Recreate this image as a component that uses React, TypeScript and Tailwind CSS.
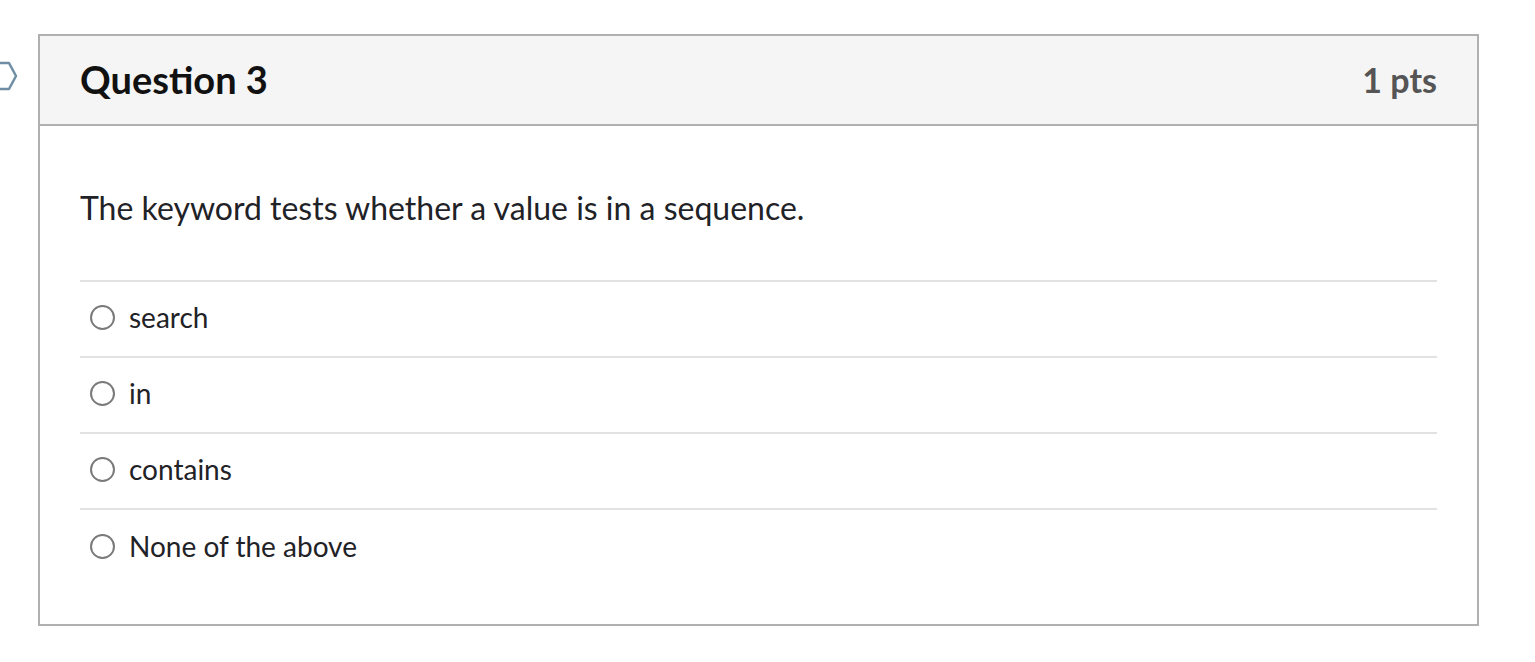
import React from "react";

const answers = ["search", "in", "contains", "None of the above"];

function FlagIcon() {
  return (
    <svg
      width="22"
      height="32"
      viewBox="0 0 22 32"
      className="absolute left-[-4px] top-[60px]"
      aria-hidden="true"
    >
      <path
        d="M0 3 H13 L20 16 L13 29 H0"
        fill="none"
        stroke="#6f8ea5"
        strokeWidth="2.5"
        strokeLinejoin="round"
      />
    </svg>
  );
}

export default function App() {
  return (
    <div className="relative min-h-[662px] bg-white pt-[34px] pl-[38px] font-['Lato','Noto_Sans',sans-serif]">
      <FlagIcon />
      <div className="w-[1441px] border-2 border-[#b0b0b0]">
        <div className="flex h-[90px] items-center justify-between border-b-2 border-[#b0b0b0] bg-[#f5f5f5] pb-[2px] pl-[40px] pr-[40px]">
          <h2 className="text-[38px] font-bold text-[#111]">Question 3</h2>
          <span className="text-[34px] font-bold text-[#555]">1 pts</span>
        </div>
        <div className="px-[40px] pt-[62px] pb-[38px]">
          <p className="text-[32px] text-[#1f2226] leading-[40px]">
            The keyword tests whether a value is in a sequence.
          </p>
          <div className="mt-[52px] border-t-2 border-[#e2e2e2]">
            {answers.map((a, i) => (
              <label
                key={a}
                className={`flex h-[76px] items-center gap-[14px] pb-[4px] pl-[10px] ${
                  i < answers.length - 1 ? "border-b-2 border-[#e2e2e2]" : ""
                }`}
              >
                <span className="h-[25px] w-[25px] rounded-full border-2 border-[#7a7a7a] bg-white" />
                <span className="text-[28px] text-[#1f2226]">{a}</span>
              </label>
            ))}
          </div>
        </div>
      </div>
    </div>
  );
}
